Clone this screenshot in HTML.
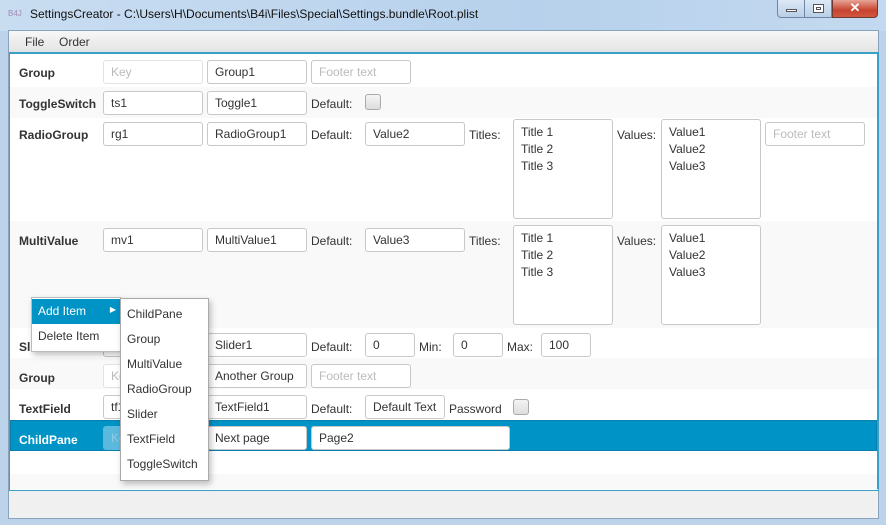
<!DOCTYPE html>
<html><head><style>
*{margin:0;padding:0;box-sizing:border-box}
body{width:886px;height:525px;overflow:hidden;font-family:"Liberation Sans",sans-serif;font-size:12px;color:#333;background:#bcd3ea;position:relative}
.a{position:absolute}
.f{position:absolute;height:24px;background:#fff;border:1px solid #c8c8c8;border-radius:3px;padding:4px 7px;font-size:12px;color:#333;white-space:nowrap;overflow:hidden}
.p{color:#bbb}
.l{position:absolute;font-size:12px;color:#333}
.b{position:absolute;left:19px;font-weight:bold;font-size:12px;color:#333}
.lst{position:absolute;background:#fff;border:1px solid #c8c8c8;border-radius:3px;padding:4px 7px;line-height:17px}
.cb{position:absolute;width:16px;height:16px;border:1px solid #aaa;border-radius:3px;background:linear-gradient(#f4f4f4,#ddd)}
.row{position:absolute;left:10px;width:867px}
.mi{height:25px;padding:5px 6px;font-size:12px;color:#333}
</style></head><body>
<!-- title bar -->
<div class="a" style="left:0;top:0;width:886px;height:31px;background:linear-gradient(90deg,#c9ddf1,#b7d1ec 60%,#c3d9ef)"></div>
<div class="a" style="left:8px;top:9px;font-size:8px;color:#a58ab5">B4J</div>
<div class="a" style="left:30px;top:7px;font-size:12px;color:#111">SettingsCreator - C:\Users\H\Documents\B4i\Files\Special\Settings.bundle\Root.plist</div>
<div class="a" style="left:777px;top:0;width:28px;height:18px;border:1px solid #6e86a3;border-top:none;border-radius:0 0 0 4px;background:linear-gradient(#dce8f5,#b9cfe7)"></div>
<div class="a" style="left:786px;top:9px;width:11px;height:3px;border:1px solid #555;background:#fff"></div>
<div class="a" style="left:805px;top:0;width:27px;height:18px;border:1px solid #6e86a3;border-top:none;border-left:none;background:linear-gradient(#dce8f5,#b9cfe7)"></div>
<div class="a" style="left:813px;top:4px;width:11px;height:9px;border:1px solid #555;background:#fff;box-shadow:inset 0 0 0 2px #fff,inset 0 0 0 3px #555"></div>
<div class="a" style="left:832px;top:0;width:46px;height:18px;border:1px solid #6e3a36;border-top:none;border-radius:0 0 4px 0;background:linear-gradient(#e8a496,#c7432f 60%,#d2583f);color:#fff;font-weight:bold;font-size:13px;text-align:center;line-height:16px">✕</div>
<!-- window inner -->
<div class="a" style="left:8px;top:30px;width:871px;height:489px;background:#f0f0f0;border:1px solid #8aa3bd"></div>
<div class="a" style="left:9px;top:31px;width:869px;height:22px;background:linear-gradient(#f7f7f7,#e3e3e3)"></div>
<div class="a" style="left:25px;top:35px">File</div>
<div class="a" style="left:59px;top:35px">Order</div>
<!-- list -->
<div class="a" style="left:9px;top:52px;width:870px;height:439px;border:1px solid #3aa0c8;border-top:2px solid #3aa0c8;background:#fff"></div>
<div class="row" style="top:87px;height:31px;background:#f9f9f9"></div>
<div class="row" style="top:221px;height:107px;background:#f9f9f9"></div>
<div class="row" style="top:358px;height:31px;background:#f9f9f9"></div>
<div class="row" style="top:420px;height:31px;background:#0093c6;border:1px solid #0a7fae"></div>
<div class="row" style="top:474px;height:15px;background:#f9f9f9"></div>
<div class="a" style="left:877px;top:54px;width:2px;height:435px;background:#3aa0c8"></div>

<!-- Group -->
<div class="b" style="top:66px">Group</div>
<div class="f p" style="left:103px;top:60px;width:100px;border-color:#e2e2e2">Key</div>
<div class="f" style="left:207px;top:60px;width:100px">Group1</div>
<div class="f p" style="left:311px;top:60px;width:100px">Footer text</div>
<!-- Toggle -->
<div class="b" style="top:97px">ToggleSwitch</div>
<div class="f" style="left:103px;top:91px;width:100px">ts1</div>
<div class="f" style="left:207px;top:91px;width:100px">Toggle1</div>
<div class="l" style="left:311px;top:97px">Default:</div>
<div class="cb" style="left:365px;top:94px"></div>
<!-- Radio -->
<div class="b" style="top:128px">RadioGroup</div>
<div class="f" style="left:103px;top:122px;width:100px">rg1</div>
<div class="f" style="left:207px;top:122px;width:100px">RadioGroup1</div>
<div class="l" style="left:311px;top:128px">Default:</div>
<div class="f" style="left:365px;top:122px;width:100px">Value2</div>
<div class="l" style="left:469px;top:128px">Titles:</div>
<div class="lst" style="left:513px;top:119px;width:100px;height:100px">Title 1<br>Title 2<br>Title 3</div>
<div class="l" style="left:617px;top:128px">Values:</div>
<div class="lst" style="left:661px;top:119px;width:100px;height:100px">Value1<br>Value2<br>Value3</div>
<div class="f p" style="left:765px;top:122px;width:100px">Footer text</div>
<!-- Multi -->
<div class="b" style="top:234px">MultiValue</div>
<div class="f" style="left:103px;top:228px;width:100px">mv1</div>
<div class="f" style="left:207px;top:228px;width:100px">MultiValue1</div>
<div class="l" style="left:311px;top:234px">Default:</div>
<div class="f" style="left:365px;top:228px;width:100px">Value3</div>
<div class="l" style="left:469px;top:234px">Titles:</div>
<div class="lst" style="left:513px;top:225px;width:100px;height:100px">Title 1<br>Title 2<br>Title 3</div>
<div class="l" style="left:617px;top:234px">Values:</div>
<div class="lst" style="left:661px;top:225px;width:100px;height:100px">Value1<br>Value2<br>Value3</div>
<!-- Slider -->
<div class="b" style="top:340px">Slider</div>
<div class="f" style="left:103px;top:333px;width:100px"></div>
<div class="f" style="left:207px;top:333px;width:100px">Slider1</div>
<div class="l" style="left:311px;top:340px">Default:</div>
<div class="f" style="left:365px;top:333px;width:50px">0</div>
<div class="l" style="left:419px;top:340px">Min:</div>
<div class="f" style="left:453px;top:333px;width:50px">0</div>
<div class="l" style="left:507px;top:340px">Max:</div>
<div class="f" style="left:541px;top:333px;width:50px">100</div>
<!-- Group2 -->
<div class="b" style="top:371px">Group</div>
<div class="f p" style="left:103px;top:364px;width:100px;border-color:#e2e2e2">Key</div>
<div class="f" style="left:207px;top:364px;width:100px">Another Group</div>
<div class="f p" style="left:311px;top:364px;width:100px">Footer text</div>
<!-- TextField -->
<div class="b" style="top:402px">TextField</div>
<div class="f" style="left:103px;top:395px;width:100px">tf1</div>
<div class="f" style="left:207px;top:395px;width:100px">TextField1</div>
<div class="l" style="left:311px;top:402px">Default:</div>
<div class="f" style="left:365px;top:395px;width:80px">Default Text</div>
<div class="l" style="left:449px;top:402px">Password</div>
<div class="cb" style="left:513px;top:399px"></div>
<!-- ChildPane -->
<div class="b" style="top:433px;color:#fff">ChildPane</div>
<div class="f" style="left:103px;top:426px;width:100px;background:#5cb9de;border-color:#5cb9de;color:#8ccbe6">Key</div>
<div class="f" style="left:207px;top:426px;width:100px">Next page</div>
<div class="f" style="left:311px;top:426px;width:199px">Page2</div>

<!-- context menu -->
<div class="a" style="left:31px;top:297px;width:90px;height:55px;background:#fff;border:1px solid #bbb;box-shadow:2px 3px 6px rgba(0,0,0,.25)">
<div class="mi" style="background:#0093c6;color:#fff;margin-top:1px">Add Item<span style="position:absolute;right:4px;top:7px;font-size:8px">▶</span></div>
<div class="mi">Delete Item</div>
</div>
<div class="a" style="left:120px;top:298px;width:89px;height:183px;background:#fff;border:1px solid #aaa;box-shadow:2px 3px 6px rgba(0,0,0,.25);padding-top:3px">
<div class="mi">ChildPane</div><div class="mi">Group</div><div class="mi">MultiValue</div><div class="mi">RadioGroup</div><div class="mi">Slider</div><div class="mi">TextField</div><div class="mi">ToggleSwitch</div>
</div>
</body></html>
